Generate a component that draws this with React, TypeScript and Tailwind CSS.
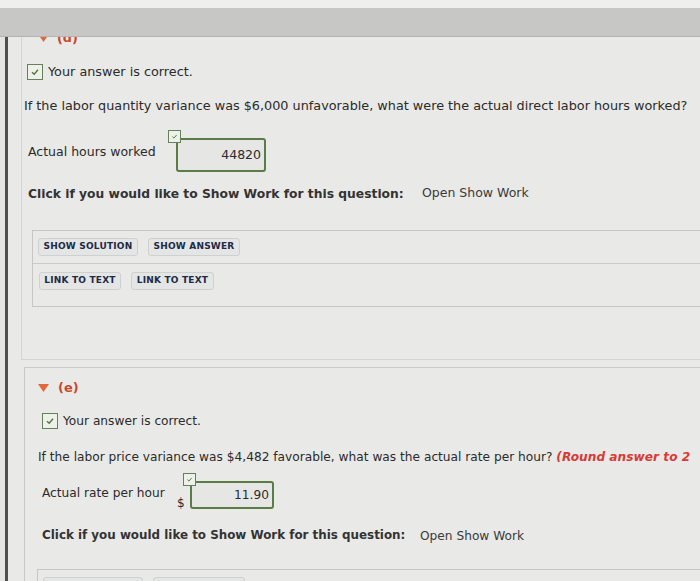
import React from 'react';

const Check: React.FC<{ size?: number }> = ({ size = 16 }) => (
  <div
    className="flex items-center justify-center border border-[#66805a] bg-[#eef0ea]"
    style={{ width: size, height: size }}
  >
    <svg width={size - 6} height={size - 6} viewBox="0 0 10 10" fill="none">
      <path d="M2 5.2 L4.2 7.3 L8 2.8" stroke="#4d7a3a" strokeWidth="1.4" />
    </svg>
  </div>
);

const Btn: React.FC<{ label: string; w: string }> = ({ label, w }) => (
  <div
    className={`${w} h-[18px] flex items-center justify-center rounded-[3px] border border-[#cfd0d0] bg-[#e4e5e5] text-[9px] font-bold tracking-[0.2px] text-[#1e2a45]`}
  >
    {label}
  </div>
);

const ButtonPanel: React.FC = () => (
  <div className="ml-[10px] h-[77px] border border-[#c6c6c4] border-r-0">
    <div className="h-[33px] border-b border-[#cacac8] flex items-center gap-[10px] pl-[5px]">
      <Btn label="SHOW SOLUTION" w="w-[100px]" />
      <Btn label="SHOW ANSWER" w="w-[92px]" />
    </div>
    <div className="pt-[8px] flex gap-[10px] pl-[6px]">
      <Btn label="LINK TO TEXT" w="w-[82px]" />
      <Btn label="LINK TO TEXT" w="w-[83px]" />
    </div>
  </div>
);

const Arrow: React.FC = () => (
  <svg width="11" height="8" viewBox="0 0 11 8">
    <path d="M0 0 H11 L5.5 8 Z" fill="#e2673d" />
  </svg>
);

export default function App() {
  return (
    <div className="relative w-[700px] h-[581px] overflow-hidden bg-[#e9e9e7] font-['DejaVu_Sans',sans-serif] text-[#2b2b2b]">
      {/* browser chrome strip */}
      <div className="relative z-10 h-[8px] bg-[#efefed]" />
      <div className="relative z-10 h-[29px] bg-[#c7c7c5] border-b border-[#b3b3b1]" />

      <div className="flex h-full">
        <div className="w-[5px] bg-[#e4e4e2]" />
        <div className="flex-1 border-l-[3px] border-[#4f4f4f] pl-[13px]">
          {/* part (d) */}
          <div className="h-[323px] flex flex-col border-l border-[#d4d4d2] border-b text-[12.8px]">
            <div className="-mt-[6px] h-[14px] flex items-center gap-[8px] pl-[16px] text-[#c7492e] font-bold">
              <Arrow />
              <span>(d)</span>
            </div>
            <div className="mt-[17px] flex items-center gap-[5px] pl-[5px]">
              <Check />
              <span>Your answer is correct.</span>
            </div>
            <div className="mt-[15px] pl-[2px] whitespace-nowrap">
              If the labor quantity variance was $6,000 unfavorable, what were the actual direct labor hours worked?
            </div>
            <div className="mt-[23px] flex items-center pl-[6px] text-[12.5px]">
              <div className="w-[148px] -mt-[6px]">Actual hours worked</div>
              <div className="relative">
                <div className="absolute -left-[8px] -top-[8px]">
                  <Check size={13} />
                </div>
                <div className="w-[90px] h-[34px] border-2 border-[#5a7c47] rounded-[3px] bg-[#e6e7e4] flex items-center justify-end pr-[3px]">
                  44820
                </div>
              </div>
            </div>
            <div className="mt-[12px] flex items-center pl-[6px] whitespace-nowrap">
              <span className="w-[394px] font-bold text-[12.3px] text-[#333]">
                Click if you would like to Show Work for this question:
              </span>
              <span className="text-[12.5px] text-[#3a3a3a]">Open Show Work</span>
            </div>
            <div className="mt-[27px]">
              <ButtonPanel />
            </div>
          </div>

          {/* part (e) */}
          <div className="mt-[7px] ml-[3px] flex flex-col border-l border-t border-[#c9c9c7] h-[300px] text-[12.2px]">
            <div className="mt-[10px] flex items-center gap-[9px] pl-[13px] text-[13px] text-[#c7492e] font-bold">
              <Arrow />
              <span>(e)</span>
            </div>
            <div className="mt-[14px] flex items-center gap-[5px] pl-[17px]">
              <Check />
              <span>Your answer is correct.</span>
            </div>
            <div className="mt-[18px] pl-[13px] whitespace-nowrap">
              If the labor price variance was $4,482 favorable, what was the actual rate per hour?{' '}
              <span className="font-bold italic text-[#d83a36]">(Round answer to 2</span>
            </div>
            <div className="mt-[15px] flex items-center pl-[17px]">
              <div className="w-[148px] -mt-[4px]">Actual rate per hour</div>
              <div className="relative">
                <div className="absolute -left-[7px] -top-[8px]">
                  <Check size={13} />
                </div>
                <span className="absolute -left-[13px] top-[13px] text-[12px]">$</span>
                <div className="w-[84px] h-[28px] border-2 border-[#5a7c47] rounded-[3px] bg-[#e6e7e4] flex items-center justify-end pr-[3px]">
                  11.90
                </div>
              </div>
            </div>
            <div className="mt-[18px] flex items-center pl-[17px] whitespace-nowrap">
              <span className="w-[378px] font-bold text-[11.9px] text-[#333]">
                Click if you would like to Show Work for this question:
              </span>
              <span className="text-[#3a3a3a]">Open Show Work</span>
            </div>
            <div className="mt-[24px] ml-[2px]">
              <ButtonPanel />
            </div>
          </div>
        </div>
      </div>
    </div>
  );
}
